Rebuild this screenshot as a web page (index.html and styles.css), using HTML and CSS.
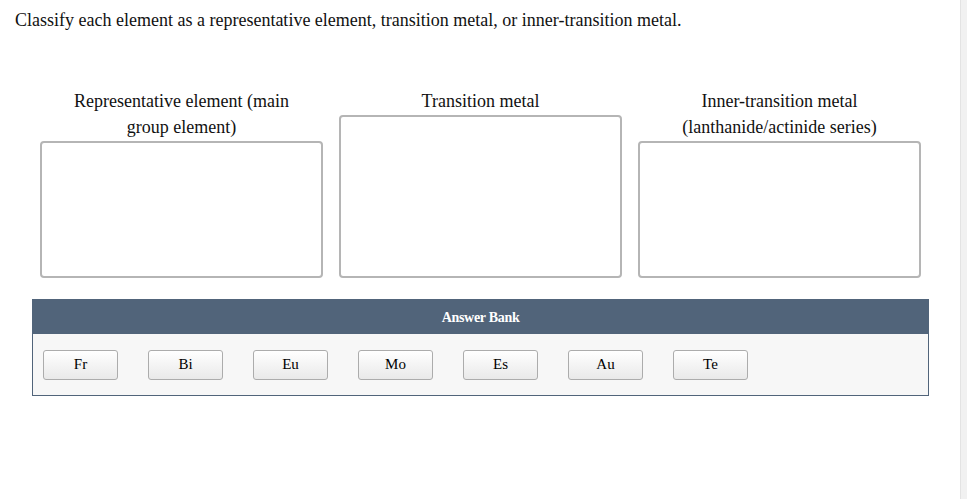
FILE: index.html
```html
<!DOCTYPE html>
<html>
<head>
<meta charset="utf-8">
<link rel="stylesheet" href="styles.css">
</head>
<body>
<div class="page">
  <main class="main">
    <p class="prompt">Classify each element as a representative element, transition metal, or inner-transition metal.</p>
    <div class="columns">
      <div class="col">
        <div class="label">Representative element (main group element)</div>
        <div class="drop"></div>
      </div>
      <div class="col">
        <div class="label">Transition metal</div>
        <div class="drop"></div>
      </div>
      <div class="col">
        <div class="label">Inner-transition metal (lanthanide/actinide series)</div>
        <div class="drop"></div>
      </div>
    </div>
    <div class="bank">
      <div class="bank-head">Answer Bank</div>
      <div class="bank-body">
        <div class="chip">Fr</div>
        <div class="chip">Bi</div>
        <div class="chip">Eu</div>
        <div class="chip">Mo</div>
        <div class="chip">Es</div>
        <div class="chip">Au</div>
        <div class="chip">Te</div>
      </div>
    </div>
  </main>
  <div class="rail"></div>
</div>
</body>
</html>
```
FILE: styles.css
```css
html, body {
  margin: 0;
  padding: 0;
  background: #ffffff;
}
body {
  font-family: "Liberation Serif", "Times New Roman", serif;
  color: #111;
}
.page {
  display: flex;
  min-height: 499px;
}
.main {
  flex: 1;
  padding: 10px 0 0 0;
}
.prompt {
  margin: 0 0 0 15px;
  font-size: 18px;
  line-height: 20px;
}
.columns {
  display: flex;
  align-items: stretch;
  gap: 16px;
  margin: 58px 0 0 40px;
  width: 881px;
}
.col {
  width: 283px;
  display: flex;
  flex-direction: column;
}
.label {
  text-align: center;
  font-size: 18px;
  line-height: 26px;
  margin-bottom: 1px;
  padding: 0 20px;
}
.drop {
  flex: 1;
  min-height: 133px;
  border: 2px solid #b5b5b5;
  border-radius: 4px;
  background: #fff;
}
.bank {
  margin: 21px 0 0 32px;
  width: 897px;
  box-sizing: border-box;
  border: 1px solid #51647a;
}
.bank-head {
  background: #51647a;
  color: #fff;
  font-weight: bold;
  font-size: 14px;
  height: 34px;
  line-height: 35px;
  text-align: center;
  letter-spacing: -0.3px;
}
.bank-body {
  background: #f7f7f7;
  display: flex;
  gap: 30px;
  padding: 16px 10px 15px 10px;
}
.chip {
  width: 73px;
  height: 28px;
  border: 1px solid #acacac;
  border-radius: 3px;
  background: linear-gradient(#ffffff, #e9e9e9);
  font-size: 15px;
  line-height: 27px;
  text-align: center;
  color: #000;
}
.rail {
  width: 6px;
  background: #f1f1f1;
  border-left: 1px solid #e3e3e3;
}
```
